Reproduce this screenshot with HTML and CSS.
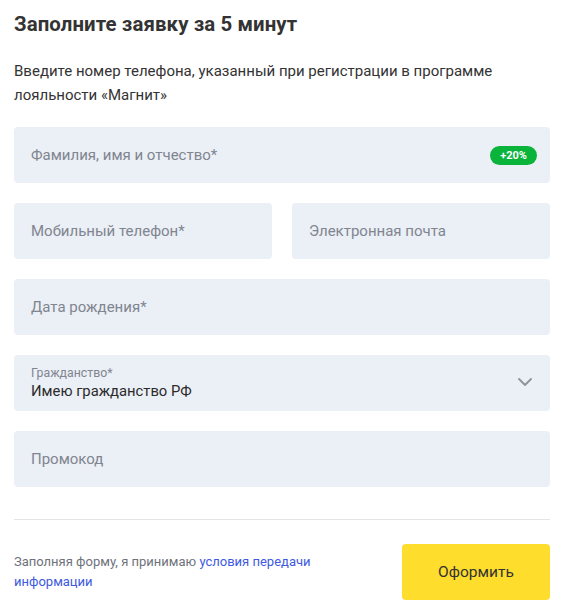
FILE: index.html
```html
<!DOCTYPE html>
<html lang="ru">
<head>
<meta charset="utf-8">
<link rel="stylesheet" href="styles.css">
</head>
<body>
<div class="page">
  <h1 class="title">Заполните заявку за 5 минут</h1>
  <p class="lead">Введите номер телефона, указанный при регистрации в программе лояльности «Магнит»</p>
  <form class="form">
    <div class="field">
      <span class="placeholder">Фамилия, имя и отчество*</span>
      <span class="badge">+20%</span>
    </div>
    <div class="row">
      <div class="field"><span class="placeholder">Мобильный телефон*</span></div>
      <div class="field"><span class="placeholder">Электронная почта</span></div>
    </div>
    <div class="field"><span class="placeholder">Дата рождения*</span></div>
    <div class="field select">
      <div class="select-text">
        <span class="select-label">Гражданство*</span>
        <span class="select-value">Имею гражданство РФ</span>
      </div>
      <svg class="chevron" width="14" height="8" viewBox="0 0 14 8"><path d="M1 1l6 6 6-6" fill="none" stroke="#8d929c" stroke-width="1.8" stroke-linecap="round" stroke-linejoin="round"/></svg>
    </div>
    <div class="field"><span class="placeholder">Промокод</span></div>
  </form>
  <hr class="divider">
  <div class="footer">
    <div class="terms">
      <div class="terms-line">Заполняя форму, я принимаю <a href="#" class="link">условия передачи</a></div>
      <div class="terms-line"><a href="#" class="link">информации</a></div>
    </div>
    <button class="submit" type="button">Оформить</button>
  </div>
</div>
</body>
</html>
```
FILE: styles.css
```css
* { box-sizing: border-box; }
html, body { margin: 0; padding: 0; background: #fff; }
body { font-family: Roboto, "Liberation Sans", Arial, sans-serif; color: #333; }
.page { padding: 10px 12px 0 14px; }
.title {
  margin: 0;
  font-size: 20.4px;
  line-height: 28px;
  font-weight: 700;
  color: #333333;
  letter-spacing: 0.1px;
}
.lead {
  margin: 21px 0 0;
  font-size: 15px;
  line-height: 24px;
  color: #333;
}
.form {
  margin-top: 20px;
  display: flex;
  flex-direction: column;
  gap: 20px;
}
.row {
  display: grid;
  grid-template-columns: 1fr 1fr;
  gap: 20px;
}
.field {
  height: 56px;
  background: #ebeff6;
  border-radius: 4px;
  display: flex;
  align-items: center;
  justify-content: space-between;
  padding: 0 13px 0 17px;
}
.placeholder {
  font-size: 15px;
  color: #80858f;
}
.badge {
  background: #0ab33a;
  color: #fff;
  font-size: 11px;
  font-weight: 700;
  height: 19px;
  line-height: 19px;
  padding: 0 10px;
  border-radius: 10px;
}
.select { padding-right: 18px; }
.select-text { display: flex; flex-direction: column; padding-top: 1px; }
.select-label { font-size: 12.3px; color: #80858f; line-height: 15px; }
.select-value { font-size: 14.8px; color: #2b2b2b; line-height: 20px; }
.chevron { margin-top: -2px; }
.divider {
  margin: 32px 0 0;
  border: 0;
  border-top: 1px solid #e3e5e8;
}
.footer {
  margin-top: 24px;
  display: flex;
  align-items: center;
  justify-content: space-between;
}
.terms {
  font-size: 13px;
  line-height: 20px;
  color: #6e727b;
}
.terms-line { white-space: nowrap; }
.link { color: #3d5ae0; text-decoration: none; }
.submit {
  width: 148px;
  height: 56px;
  border: 0;
  border-radius: 4px;
  background: #fedd2c;
  font-family: inherit;
  font-size: 15.5px;
  color: #333;
}
```
